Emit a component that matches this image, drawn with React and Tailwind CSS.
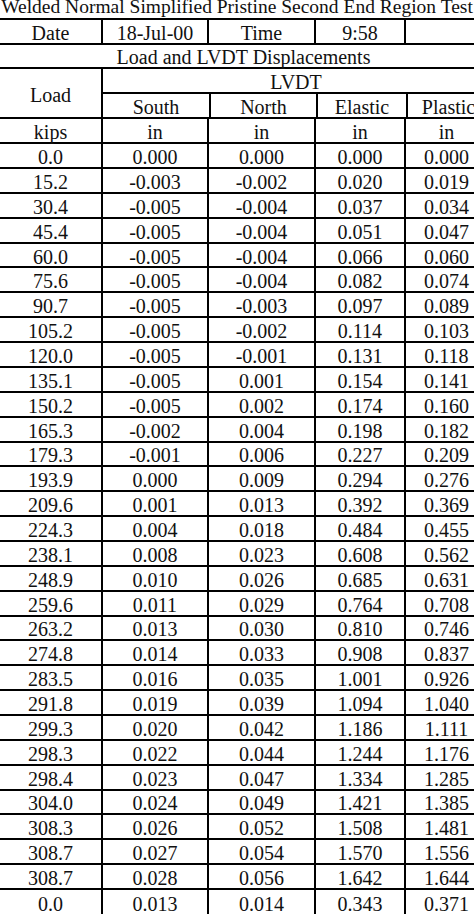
import React from "react";

const rows = [
  ["0.0", "0.000", "0.000", "0.000", "0.000"],
  ["15.2", "-0.003", "-0.002", "0.020", "0.019"],
  ["30.4", "-0.005", "-0.004", "0.037", "0.034"],
  ["45.4", "-0.005", "-0.004", "0.051", "0.047"],
  ["60.0", "-0.005", "-0.004", "0.066", "0.060"],
  ["75.6", "-0.005", "-0.004", "0.082", "0.074"],
  ["90.7", "-0.005", "-0.003", "0.097", "0.089"],
  ["105.2", "-0.005", "-0.002", "0.114", "0.103"],
  ["120.0", "-0.005", "-0.001", "0.131", "0.118"],
  ["135.1", "-0.005", "0.001", "0.154", "0.141"],
  ["150.2", "-0.005", "0.002", "0.174", "0.160"],
  ["165.3", "-0.002", "0.004", "0.198", "0.182"],
  ["179.3", "-0.001", "0.006", "0.227", "0.209"],
  ["193.9", "0.000", "0.009", "0.294", "0.276"],
  ["209.6", "0.001", "0.013", "0.392", "0.369"],
  ["224.3", "0.004", "0.018", "0.484", "0.455"],
  ["238.1", "0.008", "0.023", "0.608", "0.562"],
  ["248.9", "0.010", "0.026", "0.685", "0.631"],
  ["259.6", "0.011", "0.029", "0.764", "0.708"],
  ["263.2", "0.013", "0.030", "0.810", "0.746"],
  ["274.8", "0.014", "0.033", "0.908", "0.837"],
  ["283.5", "0.016", "0.035", "1.001", "0.926"],
  ["291.8", "0.019", "0.039", "1.094", "1.040"],
  ["299.3", "0.020", "0.042", "1.186", "1.111"],
  ["298.3", "0.022", "0.044", "1.244", "1.176"],
  ["298.4", "0.023", "0.047", "1.334", "1.285"],
  ["304.0", "0.024", "0.049", "1.421", "1.385"],
  ["308.3", "0.026", "0.052", "1.508", "1.481"],
  ["308.7", "0.027", "0.054", "1.570", "1.556"],
  ["308.7", "0.028", "0.056", "1.642", "1.644"],
  ["0.0", "0.013", "0.014", "0.343", "0.371"],
];

const colW = ["w-[101px]", "w-[106px]", "w-[107px]", "w-[90px]", "w-[83px]"];

function Row({ cells, h, last }) {
  return (
    <div className={`flex ${h} ${last ? "" : "border-b-2 border-black"}`}>
      {cells.map((c, i) => (
        <div
          key={i}
          className={`${colW[i]} shrink-0 flex items-center justify-center pt-[3px] ${i > 0 ? "border-l-2 border-black" : ""}`}
        >
          {c}
        </div>
      ))}
    </div>
  );
}

export default function App() {
  return (
    <div className="w-[474px] h-[914px] overflow-hidden bg-white text-[#111] text-[20px] leading-none font-['Liberation_Serif','Times_New_Roman',serif]">
      <div className="w-[487px] flex flex-col">
        <div className="h-[20px] border-b-2 border-black flex items-start">
          <div className="w-[474px] flex justify-center whitespace-nowrap">
            <span className="-mt-[3px] shrink-0 text-[19.5px]">Welded Normal Simplified Pristine Second End Region Test</span>
          </div>
        </div>
        <Row cells={["Date", "18-Jul-00", "Time", "9:58", ""]} h="h-[24.5px]" />
        <div className="h-[24.7px] border-b-2 border-black flex items-center justify-center pt-[3px]">
          Load and LVDT Displacements
        </div>
        <div className="flex h-[50px] border-b-2 border-black">
          <div className="w-[101px] shrink-0 flex items-center justify-center pt-[3px]">Load</div>
          <div className="flex-1 border-l-2 border-black flex flex-col">
            <div className="h-[25px] border-b-2 border-black flex items-center justify-center pt-[3px]">LVDT</div>
            <div className="flex flex-1">
              <div className="w-[106px] shrink-0 flex items-center justify-center pt-[3px]">South</div>
              <div className="w-[107px] shrink-0 border-l-2 border-black flex items-center justify-center pt-[3px]">North</div>
              <div className="w-[90px] shrink-0 border-l-2 border-black flex items-center justify-center pt-[3px]">Elastic</div>
              <div className="w-[83px] shrink-0 border-l-2 border-black flex items-center justify-center pt-[3px]">Plastic</div>
            </div>
          </div>
        </div>
        <Row cells={["kips", "in", "in", "in", "in"]} h="h-[25px]" />
        {rows.map((r, i) => (
          <Row key={i} cells={r} h="h-[24.87px]" last={i === rows.length - 1} />
        ))}
      </div>
    </div>
  );
}
